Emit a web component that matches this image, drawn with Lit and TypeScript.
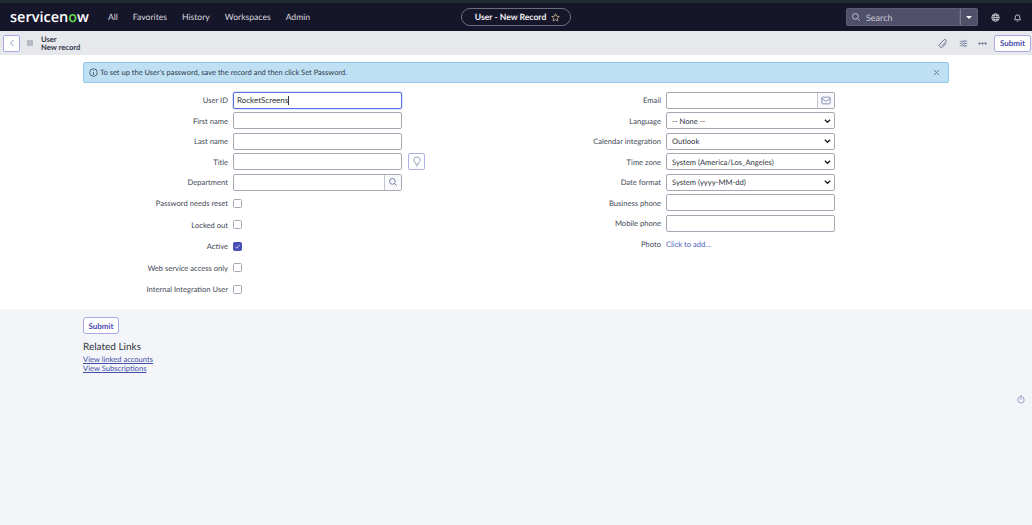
import { LitElement, html, css, svg } from "lit";
import { customElement } from "lit/decorators.js";

const textRows = ["First name", "Last name"];
const checks = [
  { label: "Password needs reset", on: false },
  { label: "Locked out", on: false },
  { label: "Active", on: true },
  { label: "Web service access only", on: false },
  { label: "Internal Integration User", on: false },
];
const selects = [
  { label: "Language", value: "-- None --" },
  { label: "Calendar integration", value: "Outlook" },
  { label: "Time zone", value: "System (America/Los_Angeles)" },
  { label: "Date format", value: "System (yyyy-MM-dd)" },
];

const searchIcon = svg`<circle cx="7" cy="7" r="4.6"/><path d="M10.4 10.4 14 14"/>`;

@customElement("app-root")
export class AppRoot extends LitElement {
  static styles = css`
    :host {
      display: block;
      height: 525px;
      overflow: hidden;
      background: #f4f5f8;
      font-family: Lato, "Open Sans", sans-serif;
      font-size: 7.6px;
      color: #3d4450;
      text-rendering: geometricPrecision;
    }
    svg {
      display: block;
      fill: none;
      stroke: currentColor;
    }
    .nav {
      height: 28px;
      border-top: 3px solid #1e2a2d;
      background: #16162a;
      display: flex;
      align-items: center;
      color: #e4e5ea;
      position: relative;
    }
    .logo {
      margin-left: 10px;
      width: 88px;
      font-family: "Open Sans", sans-serif;
      font-size: 14.5px;
      font-weight: 600;
      color: #fff;
    }
    .logo span {
      color: #62d84e;
    }
    .menu {
      display: flex;
      gap: 15px;
      margin-left: 10px;
      font-size: 8.6px;
      color: #d6d7de;
    }
    .pill {
      position: absolute;
      left: 461px;
      top: 5px;
      width: 105px;
      height: 16px;
      border: 1px solid #6b6d7c;
      border-radius: 9px;
      display: flex;
      align-items: center;
      justify-content: center;
      gap: 5px;
      padding-left: 3px;
      box-sizing: content-box;
      font-size: 8.6px;
      font-weight: 700;
      color: #f2f2f5;
    }
    .pill svg {
      color: #c9b99a;
    }
    .right {
      margin-left: auto;
      display: flex;
      align-items: center;
    }
    .search {
      width: 112px;
      height: 16px;
      display: flex;
      align-items: center;
      background: #50506a;
      border: 1px solid #5d5d75;
      border-radius: 2px 0 0 2px;
      color: #c9cad3;
      font-size: 9px;
    }
    .search svg {
      margin: 0 5px 0 4px;
    }
    .caret {
      width: 16px;
      height: 16px;
      display: flex;
      align-items: center;
      justify-content: center;
      background: #50506a;
      border: 1px solid #5d5d75;
      border-left: 1px solid #777789;
      border-radius: 0 2px 2px 0;
    }
    .caret i {
      border-left: 3px solid transparent;
      border-right: 3px solid transparent;
      border-top: 3px solid #fff;
    }
    .nav-icons {
      display: flex;
      gap: 13px;
      margin: 0 10px 0 13px;
      color: #dcdde3;
    }
    .sub {
      height: 24px;
      background: #e7e8ec;
      display: flex;
      align-items: center;
      font-size: 7.6px;
      font-weight: 700;
      line-height: 8px;
      color: #33394a;
    }
    .back {
      width: 15px;
      height: 15px;
      margin-left: 3px;
      border: 1px solid #a9a7e4;
      border-radius: 2px;
      background: #fff;
      display: flex;
      align-items: center;
      justify-content: center;
      color: #8f9cc8;
    }
    .lines {
      margin: 0 8px 0 7px;
      color: #7e8496;
    }
    .sub-icons {
      margin-left: auto;
      display: flex;
      align-items: center;
      gap: 10.5px;
      color: #6f7a9a;
    }
    .btn {
      height: 15px;
      padding: 0 5px;
      border: 1px solid #a9a7e4;
      border-radius: 3px;
      background: #fff;
      font-size: 8px;
      font-weight: 700;
      color: #4a4fb0;
      display: flex;
      align-items: center;
    }
    .sub-icons .btn {
      margin: 0 1px 0 -4px;
    }
    .main {
      height: 254px;
      box-sizing: border-box;
      background: #fff;
      padding: 7px 83px 0;
    }
    .alert {
      height: 21px;
      box-sizing: border-box;
      background: #bfdff2;
      border: 1px solid #92c8ec;
      border-radius: 2px;
      display: flex;
      align-items: center;
      gap: 2px;
      padding: 0 8px 0 5px;
      font-size: 7.5px;
      color: #2e3a4a;
    }
    .alert .x {
      margin-left: auto;
      color: #5f6f85;
    }
    .form {
      display: grid;
      grid-template-columns: 433px 433px;
      margin-top: 7px;
    }
    .row {
      display: grid;
      grid-template-columns: 145px auto;
      column-gap: 5px;
      align-items: center;
      justify-content: start;
      height: 20.5px;
    }
    .row.tall {
      height: 21.5px;
    }
    .label {
      text-align: right;
      color: #424956;
    }
    .field {
      display: flex;
      align-items: center;
    }
    .box {
      width: 169px;
      height: 17px;
      box-sizing: border-box;
      background: #fff;
      border: 1px solid #a5a9b3;
      border-radius: 2px;
      display: flex;
      align-items: center;
      padding-left: 3px;
      color: #2e3440;
    }
    .box.focus {
      border: 1px solid #5a70e0;
      box-shadow: 0 0 0 1px #dfe3fa;
      font-size: 8px;
    }
    .caret-text {
      display: inline-block;
      width: 1px;
      height: 9px;
      background: #2e3440;
    }
    .box.sel {
      padding: 0 3px 0 5px;
      justify-content: space-between;
    }
    .sel svg {
      color: #20242c;
    }
    .box.addon {
      padding: 0;
      justify-content: flex-end;
    }
    .addon-cell {
      width: 16px;
      height: 100%;
      border-left: 1px solid #c4c7cf;
      background: #fafafc;
      display: flex;
      align-items: center;
      justify-content: center;
      color: #6f79a8;
    }
    .bulb {
      width: 17px;
      height: 17px;
      box-sizing: border-box;
      margin-left: 6px;
      border: 1px solid #aeb2e8;
      border-radius: 2px;
      display: flex;
      align-items: center;
      justify-content: center;
      color: #7d8bb0;
    }
    .check {
      width: 9px;
      height: 9px;
      box-sizing: border-box;
      background: #fff;
      border: 1px solid #a5a9b3;
      border-radius: 1.5px;
    }
    .check.on {
      background: #4a4fb5;
      border-color: #4a4fb5;
      color: #d8dcf5;
      display: flex;
      align-items: center;
      justify-content: center;
    }
    .link {
      color: #4d5fc0;
    }
    .bottom {
      padding: 8px 83px 0;
    }
    .bottom .btn {
      display: inline-flex;
      height: 15px;
      padding: 0 4.5px;
    }
    h2 {
      margin: 6px 0 0;
      font-size: 10px;
      font-weight: 400;
      line-height: 14px;
      color: #2f3540;
    }
    .links {
      margin-top: 1px;
    }
    .links a {
      display: block;
      width: max-content;
      line-height: 9px;
      font-size: 7.6px;
      color: #3f4fa8;
      text-decoration: underline;
    }
    .timer {
      position: absolute;
      left: 1017px;
      top: 395px;
      color: #7f86c4;
    }
  `;

  private textRow(label: string) {
    return html`<div class="row"><div class="label">${label}</div><div class="box"></div></div>`;
  }

  render() {
    return html`
      <header class="nav">
        <div class="logo">servicen<span>o</span>w</div>
        <nav class="menu">
          <span>All</span><span>Favorites</span><span>History</span><span>Workspaces</span><span>Admin</span>
        </nav>
        <div class="pill">
          User - New Record
          <svg width="9" height="9" viewBox="0 0 12 12" stroke-width="1.1"><path d="M6 1l1.5 3.3 3.6.4-2.7 2.4.8 3.5L6 8.8l-3.2 1.8.8-3.5L.9 4.7l3.6-.4z"/></svg>
        </div>
        <div class="right">
          <div class="search">
            <svg width="10" height="10" viewBox="0 0 16 16" stroke-width="1.4">${searchIcon}</svg>
            Search
          </div>
          <div class="caret"><i></i></div>
          <div class="nav-icons">
            <svg width="9" height="9" viewBox="0 0 12 12" stroke-width="1"><circle cx="6" cy="6" r="5"/><ellipse cx="6" cy="6" rx="2.2" ry="5"/><path d="M1 6h10M1.6 3.5h8.8M1.6 8.5h8.8"/></svg>
            <svg width="9" height="9" viewBox="0 0 12 12" stroke-width="1.1"><path d="M2 9c.8-.8 1-1.5 1-3.5a3 3 0 0 1 6 0C9 7.500 9.200 8.200 10 9z"/><path d="M5 10.800h2"/></svg>
          </div>
        </div>
      </header>

      <div class="sub">
        <div class="back">
          <svg width="8" height="8" viewBox="0 0 8 8" stroke-width="1"><path d="M5.500 1 2.500 4l3 3"/></svg>
        </div>
        <svg class="lines" width="6" height="6" viewBox="0 0 6 6" stroke-width="0.9"><path d="M0 1h6M0 3h6M0 5h6"/></svg>
        <div>User<br />New record</div>
        <div class="sub-icons">
          <svg width="10" height="11" viewBox="0 0 12 12" stroke-width="1.2"><path d="M10 5.500 5.700 10a2.400 2.400 0 0 1-3.400-3.400L7.200 1.700a1.600 1.600 0 0 1 2.300 2.300L4.800 8.700"/></svg>
          <svg width="9" height="9" viewBox="0 0 12 12" stroke-width="1"><path d="M1 3h5M9 3h2M1 6h2M6 6h5M1 9h5M9 9h2"/><circle cx="7.500" cy="3" r="1.300"/><circle cx="4.500" cy="6" r="1.300"/><circle cx="7.500" cy="9" r="1.300"/></svg>
          <svg width="9" height="9" viewBox="0 0 12 12" stroke="none" style="fill:#5a6078"><circle cx="2" cy="6" r="1.100"/><circle cx="6" cy="6" r="1.100"/><circle cx="10" cy="6" r="1.100"/></svg>
          <div class="btn">Submit</div>
        </div>
      </div>

      <main class="main">
        <div class="alert">
          <svg width="9" height="9" viewBox="0 0 12 12" stroke-width="1"><circle cx="6" cy="6" r="5"/><path d="M6 5.300V9M6 3v1"/></svg>
          To set up the User's password, save the record and then click Set Password.
          <svg class="x" width="7" height="7" viewBox="0 0 8 8" stroke-width="1"><path d="M1 1l6 6M7 1 1 7"/></svg>
        </div>
        <div class="form">
          <div>
            <div class="row">
              <div class="label">User ID</div>
              <div class="box focus">RocketScreens<span class="caret-text"></span></div>
            </div>
            ${textRows.map((r) => this.textRow(r))}
            <div class="row">
              <div class="label">Title</div>
              <div class="field">
                <div class="box"></div>
                <div class="bulb">
                  <svg width="10" height="11" viewBox="0 0 12 13" stroke-width="1"><path d="M6 1a3.800 3.800 0 0 0-2 7l.8 2h2.400l.8-2a3.800 3.800 0 0 0-2-7z"/><path d="M5 12h2"/></svg>
                </div>
              </div>
            </div>
            <div class="row">
              <div class="label">Department</div>
              <div class="box addon">
                <div class="addon-cell">
                  <svg width="10" height="10" viewBox="0 0 16 16" stroke-width="1.500">${searchIcon}</svg>
                </div>
              </div>
            </div>
            ${checks.map(
              (c) => html`<div class="row tall">
                <div class="label">${c.label}</div>
                <div class="check ${c.on ? "on" : ""}">
                  ${c.on
                    ? html`<svg width="7" height="7" viewBox="0 0 8 8" stroke-width="1"><path d="M1.500 4.200 3.200 6l3.300-4"/></svg>`
                    : ""}
                </div>
              </div>`
            )}
          </div>
          <div>
            <div class="row">
              <div class="label">Email</div>
              <div class="box addon">
                <div class="addon-cell">
                  <svg width="10" height="9" viewBox="0 0 12 10" stroke-width="1"><rect x="1" y="1" width="10" height="8" rx="1"/><path d="M1 2.500 6 6l5-3.500"/></svg>
                </div>
              </div>
            </div>
            ${selects.map(
              (s) => html`<div class="row">
                <div class="label">${s.label}</div>
                <div class="box sel">
                  ${s.value}
                  <svg width="7" height="6" viewBox="0 0 8 6" stroke-width="1.600"><path d="M1 1.500 4 4.500l3-3"/></svg>
                </div>
              </div>`
            )}
            ${this.textRow("Business phone")} ${this.textRow("Mobile phone")}
            <div class="row">
              <div class="label">Photo</div>
              <div class="link">Click to add...</div>
            </div>
          </div>
        </div>
      </main>

      <section class="bottom">
        <div class="btn">Submit</div>
        <h2>Related Links</h2>
        <div class="links">
          <a>View linked accounts</a>
          <a>View Subscriptions</a>
        </div>
      </section>

      <svg class="timer" width="8" height="9" viewBox="0 0 10 11" stroke-width="1"><circle cx="5" cy="6" r="4"/><path d="M5 6V4M4 1h2"/></svg>
    `;
  }
}
